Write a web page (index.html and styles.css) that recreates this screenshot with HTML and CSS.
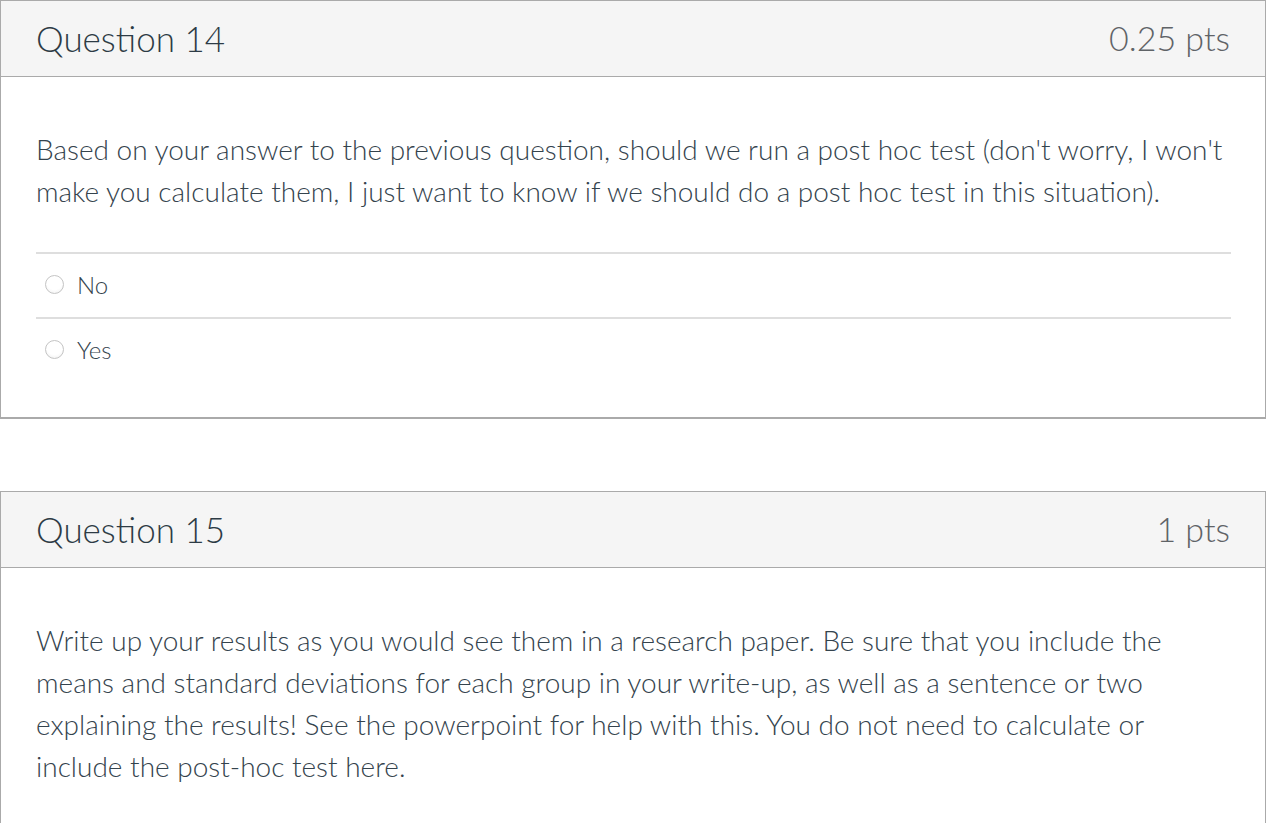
FILE: index.html
```html
<!DOCTYPE html>
<html lang="en">
<head>
<meta charset="utf-8">
<title>Quiz</title>
<link rel="stylesheet" href="styles.css">
</head>
<body>
<div class="quiz">
  <section class="question">
    <header class="question-header">
      <h2 class="question-name">Question 14</h2>
      <span class="question-points">0.25 pts</span>
    </header>
    <div class="question-body">
      <p class="question-text">Based on your answer to the previous question, should we run a post hoc test (don't worry, I won't make you calculate them, I just want to know if we should do a post hoc test in this situation).</p>
      <ul class="answers">
        <li class="answer"><span class="radio"></span><span class="answer-label">No</span></li>
        <li class="answer"><span class="radio"></span><span class="answer-label">Yes</span></li>
      </ul>
    </div>
  </section>

  <section class="question">
    <header class="question-header">
      <h2 class="question-name">Question 15</h2>
      <span class="question-points">1 pts</span>
    </header>
    <div class="question-body essay-body">
      <p class="question-text">Write up your results as you would see them in a research paper. Be sure that you include the means and standard deviations for each group in your write-up, as well as a sentence or two explaining the results! See the powerpoint for help with this. You do not need to calculate or include the post-hoc test here.</p>
    </div>
  </section>
</div>
</body>
</html>
```

FILE: styles.css
```css
html, body {
  margin: 0;
  padding: 0;
  background: #fff;
}

body {
  font-family: Lato, "Open Sans", "Liberation Sans", sans-serif;
  color: #2d3b45;
}

.quiz {
  display: flex;
  flex-direction: column;
  gap: 72px;
}

.question {
  border: 1px solid #aaaaaa;
  border-bottom-width: 2px;
  background: #fff;
}

.question-header {
  display: flex;
  align-items: center;
  justify-content: space-between;
  height: 75px;
  padding: 0 35px;
  background: #f5f5f5;
  border-bottom: 1px solid #aaaaaa;
}

.question-name {
  margin: 0 0 2px;
  font-size: 35px;
  font-weight: 300;
  color: #2d3b45;
}

.question-points {
  margin-bottom: 2px;
  font-size: 34px;
  font-weight: 300;
  color: #5f6367;
}

.question-body {
  padding: 51px 34px 35px 35px;
}

.essay-body {
  padding-bottom: 120px;
}

.question-text {
  margin: 0;
  font-size: 28px;
  line-height: 42px;
  font-weight: 300;
  color: #34434d;
}

.answers {
  list-style: none;
  margin: 40px 0 0;
  padding: 0;
}

.answer {
  display: flex;
  align-items: center;
  height: 63px;
  border-top: 2px solid #dedede;
}

.radio {
  width: 19px;
  height: 19px;
  margin: -2px 13px 0 9px;
  border-radius: 50%;
  border: 1px solid #c4c4c4;
  background: radial-gradient(circle at 50% 35%, #ffffff 55%, #ececec 100%);
  box-sizing: border-box;
}

.answer-label {
  font-size: 24px;
  font-weight: 300;
  color: #34434d;
  margin-top: -3px;
}
```
